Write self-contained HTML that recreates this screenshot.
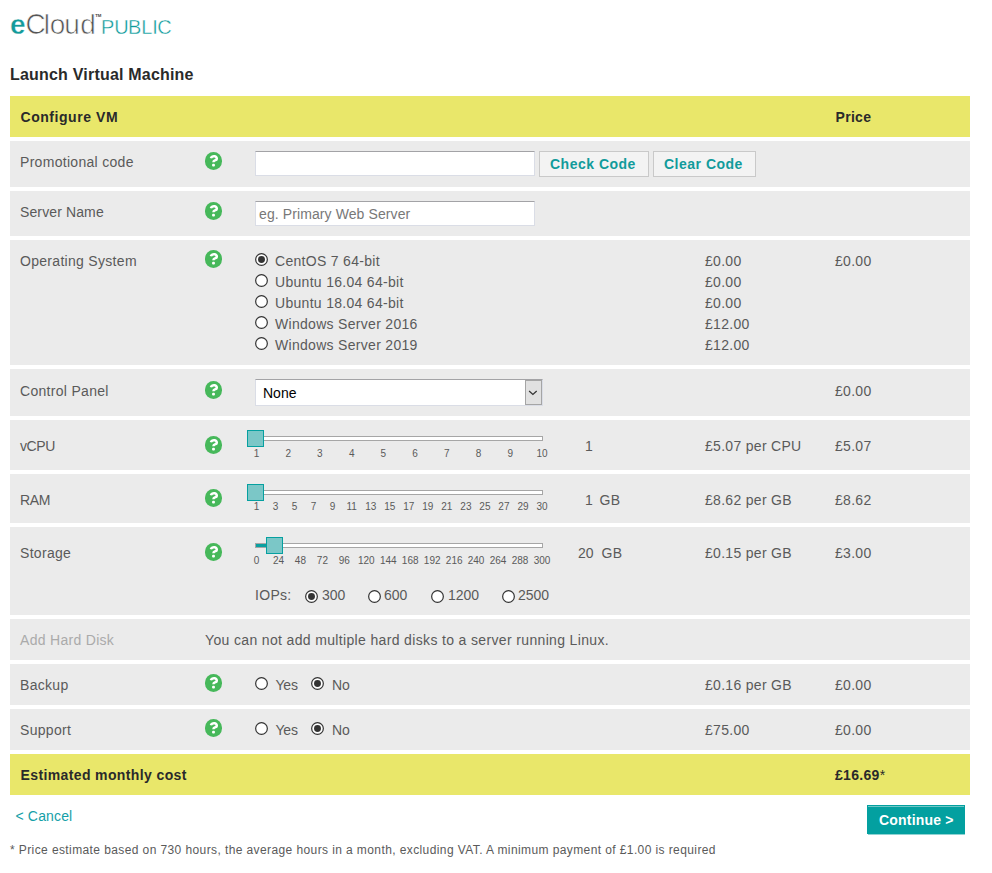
<!DOCTYPE html>
<html><head><meta charset="utf-8">
<style>
*{margin:0;padding:0;box-sizing:border-box}
html,body{width:992px;height:873px;background:#fff;overflow:hidden}
body{position:relative;font-family:"Liberation Sans",sans-serif;font-size:14px;color:#5a5a5a}
.a{position:absolute;white-space:nowrap;line-height:16px}
.row{position:absolute;left:10px;width:960px;background:#ebebeb}
.y{background:#e9e76a}
.b{font-weight:bold;color:#2a2a2a}
.help{position:absolute;width:17.5px;height:17.5px;border-radius:50%;background:#46b85a}
.help svg{position:absolute;left:0;top:0}
.inp{position:absolute;background:#fff;border:1px solid #dadde6;border-top-color:#a3a3a6}
.btn{position:absolute;background:#f3f3f3;border:1px solid #c9c9c9;color:#119b9b;font-weight:bold}
.rd{position:absolute}
.track{position:absolute;height:5px;background:#fff;border:1px solid #a6a6a6}
.handle{position:absolute;width:17px;height:17px;background:#7bc7c7;border:1.25px solid #06a0a0}
.tick{position:absolute;font-size:10px;line-height:12px;color:#5a5a5a;transform:translateX(-50%)}
.ls{letter-spacing:0.3px}
</style></head><body>

<!-- logo -->
<svg style="position:absolute;left:0;top:0" width="200" height="50">
 <text x="10" y="34" font-family="Liberation Sans" font-weight="bold" font-size="28" fill="#139a9a" stroke="#fff" stroke-width="0.35">e</text>
 <text transform="translate(0 34) scale(1 1.07) translate(0 -34)" x="25.4" y="34" font-family="Liberation Sans" font-size="28" fill="#555" stroke="#fff" stroke-width="0.65">C</text><text transform="translate(0 34) scale(1 1.02) translate(0 -34)" x="43.65 49.8 64.3 80.2" y="34" font-family="Liberation Sans" font-size="28" fill="#555" stroke="#fff" stroke-width="0.65">loud</text>
 <text x="95.2" y="16.9" font-family="Liberation Sans" font-weight="bold" font-size="4.3" fill="#444">TM</text>
 <text transform="translate(0 34) scale(1 1.0) translate(0 -34)" x="101 114.25 128 141.3 152.35 157.15" y="34" font-family="Liberation Sans" font-size="20" fill="#0c9a9a" stroke="#fff" stroke-width="0.4">PUBLIC</text>
</svg>

<div class="a b" style="left:10px;top:66px;font-size:16px;line-height:18px;letter-spacing:0.2px">Launch Virtual Machine</div>

<!-- header -->
<div class="row y" style="top:96px;height:41px"></div>
<div class="a b" style="left:20.5px;top:109px;letter-spacing:0.55px">Configure VM</div>
<div class="a b" style="left:835.5px;top:109px;letter-spacing:0.3px">Price</div>

<!-- promo -->
<div class="row" style="top:141px;height:46px"></div>
<div class="a ls" style="left:20px;top:154px">Promotional code</div>
<div class="help" style="left:204.8px;top:152.3px"><svg width="18" height="18" viewBox="0 0 18 18"><path d="M5.95 6.2 A2.95 2.45 0 1 1 11.5 7.7 C10.3 8.4 8.4 8.6 8.4 10.2" fill="none" stroke="#fff" stroke-width="2.5"/><rect x="7.05" y="11.8" width="2.9" height="2.8" rx="1.1" fill="#fff"/></svg></div>
<div class="inp" style="left:255px;top:151px;width:280px;height:25px"></div>
<div class="btn" style="left:539px;top:151px;width:110px;height:26px"></div>
<div class="a b ls" style="left:550px;top:156px;color:#119b9b;letter-spacing:0.5px">Check Code</div>
<div class="btn" style="left:653px;top:151px;width:103px;height:26px"></div>
<div class="a b ls" style="left:664px;top:156px;color:#119b9b;letter-spacing:0.5px">Clear Code</div>

<!-- server name -->
<div class="row" style="top:191px;height:45px"></div>
<div class="a" style="left:20px;top:204px;letter-spacing:0.12px">Server Name</div>
<div class="help" style="left:204.8px;top:202.3px"><svg width="18" height="18" viewBox="0 0 18 18"><path d="M5.95 6.2 A2.95 2.45 0 1 1 11.5 7.7 C10.3 8.4 8.4 8.6 8.4 10.2" fill="none" stroke="#fff" stroke-width="2.5"/><rect x="7.05" y="11.8" width="2.9" height="2.8" rx="1.1" fill="#fff"/></svg></div>
<div class="inp" style="left:255px;top:201px;width:280px;height:25px"></div>
<div class="a" style="left:259px;top:206px;color:#787878;letter-spacing:0.1px">eg. Primary Web Server</div>

<!-- OS -->
<div class="row" style="top:240px;height:125px"></div>
<div class="a ls" style="left:20px;top:253px">Operating System</div>
<div class="help" style="left:204.8px;top:250.3px"><svg width="18" height="18" viewBox="0 0 18 18"><path d="M5.95 6.2 A2.95 2.45 0 1 1 11.5 7.7 C10.3 8.4 8.4 8.6 8.4 10.2" fill="none" stroke="#fff" stroke-width="2.5"/><rect x="7.05" y="11.8" width="2.9" height="2.8" rx="1.1" fill="#fff"/></svg></div>
<svg class="rd" style="left:255px;top:253px" width="13" height="13"><circle cx="6.5" cy="6.5" r="5.85" fill="#fff" stroke="#333" stroke-width="1.2"/><circle cx="6.5" cy="6.5" r="3.45" fill="#333"/></svg>
<div class="a ls" style="left:275px;top:253px">CentOS 7 64-bit</div>
<svg class="rd" style="left:255px;top:274px" width="13" height="13"><circle cx="6.5" cy="6.5" r="5.85" fill="#fff" stroke="#333" stroke-width="1.2"/></svg>
<div class="a ls" style="left:275px;top:274px">Ubuntu 16.04 64-bit</div>
<svg class="rd" style="left:255px;top:295px" width="13" height="13"><circle cx="6.5" cy="6.5" r="5.85" fill="#fff" stroke="#333" stroke-width="1.2"/></svg>
<div class="a ls" style="left:275px;top:295px">Ubuntu 18.04 64-bit</div>
<svg class="rd" style="left:255px;top:316px" width="13" height="13"><circle cx="6.5" cy="6.5" r="5.85" fill="#fff" stroke="#333" stroke-width="1.2"/></svg>
<div class="a ls" style="left:275px;top:316px">Windows Server 2016</div>
<svg class="rd" style="left:255px;top:337px" width="13" height="13"><circle cx="6.5" cy="6.5" r="5.85" fill="#fff" stroke="#333" stroke-width="1.2"/></svg>
<div class="a ls" style="left:275px;top:337px">Windows Server 2019</div>
<div class="a ls" style="left:705px;top:253px">£0.00</div>
<div class="a ls" style="left:705px;top:274px">£0.00</div>
<div class="a ls" style="left:705px;top:295px">£0.00</div>
<div class="a ls" style="left:705px;top:316px">£12.00</div>
<div class="a ls" style="left:705px;top:337px">£12.00</div>
<div class="a ls" style="left:835px;top:253px">£0.00</div>

<!-- control panel -->
<div class="row" style="top:369px;height:47px"></div>
<div class="a ls" style="left:20px;top:383px">Control Panel</div>
<div class="help" style="left:204.8px;top:381.3px"><svg width="18" height="18" viewBox="0 0 18 18"><path d="M5.95 6.2 A2.95 2.45 0 1 1 11.5 7.7 C10.3 8.4 8.4 8.6 8.4 10.2" fill="none" stroke="#fff" stroke-width="2.5"/><rect x="7.05" y="11.8" width="2.9" height="2.8" rx="1.1" fill="#fff"/></svg></div>
<div class="inp" style="left:255px;top:379px;width:288px;height:27px"></div>
<div class="a" style="left:263px;top:385px;color:#000">None</div>
<div style="position:absolute;left:525px;top:380px;width:17px;height:25px;background:#e1e1e1;border:1px solid #a5a5a5"></div>
<svg style="position:absolute;left:525px;top:380px" width="17" height="25"><path d="M4.1 11 L7.9 14.4 L11.7 11" fill="none" stroke="#333" stroke-width="1.25"/></svg>
<div class="a ls" style="left:835px;top:383px">£0.00</div>

<!-- vCPU -->
<div class="row" style="top:420px;height:50px"></div>
<div class="a" style="left:20px;top:438px;letter-spacing:-0.4px">vCPU</div>
<div class="help" style="left:204.8px;top:436.3px"><svg width="18" height="18" viewBox="0 0 18 18"><path d="M5.95 6.2 A2.95 2.45 0 1 1 11.5 7.7 C10.3 8.4 8.4 8.6 8.4 10.2" fill="none" stroke="#fff" stroke-width="2.5"/><rect x="7.05" y="11.8" width="2.9" height="2.8" rx="1.1" fill="#fff"/></svg></div>
<div class="track" style="left:256px;top:436px;width:287px"></div>
<div class="handle" style="left:247px;top:430px"></div>
<div class="tick" style="left:256.5px;top:448px">1</div>
<div class="tick" style="left:288.2px;top:448px">2</div>
<div class="tick" style="left:319.9px;top:448px">3</div>
<div class="tick" style="left:351.7px;top:448px">4</div>
<div class="tick" style="left:383.4px;top:448px">5</div>
<div class="tick" style="left:415.1px;top:448px">6</div>
<div class="tick" style="left:446.8px;top:448px">7</div>
<div class="tick" style="left:478.6px;top:448px">8</div>
<div class="tick" style="left:510.3px;top:448px">9</div>
<div class="tick" style="left:542.0px;top:448px">10</div>
<div class="a ls" style="left:585px;top:438px">1</div>
<div class="a ls" style="left:705px;top:438px">£5.07 per CPU</div>
<div class="a ls" style="left:835px;top:438px">£5.07</div>

<!-- RAM -->
<div class="row" style="top:474px;height:49px"></div>
<div class="a" style="left:20px;top:492px;letter-spacing:-0.3px">RAM</div>
<div class="help" style="left:204.8px;top:489.3px"><svg width="18" height="18" viewBox="0 0 18 18"><path d="M5.95 6.2 A2.95 2.45 0 1 1 11.5 7.7 C10.3 8.4 8.4 8.6 8.4 10.2" fill="none" stroke="#fff" stroke-width="2.5"/><rect x="7.05" y="11.8" width="2.9" height="2.8" rx="1.1" fill="#fff"/></svg></div>
<div class="track" style="left:256px;top:490px;width:287px"></div>
<div class="handle" style="left:247px;top:484px"></div>
<div class="tick" style="left:256.5px;top:501px">1</div>
<div class="tick" style="left:275.5px;top:501px">3</div>
<div class="tick" style="left:294.6px;top:501px">5</div>
<div class="tick" style="left:313.6px;top:501px">7</div>
<div class="tick" style="left:332.6px;top:501px">9</div>
<div class="tick" style="left:351.7px;top:501px">11</div>
<div class="tick" style="left:370.7px;top:501px">13</div>
<div class="tick" style="left:389.7px;top:501px">15</div>
<div class="tick" style="left:408.8px;top:501px">17</div>
<div class="tick" style="left:427.8px;top:501px">19</div>
<div class="tick" style="left:446.8px;top:501px">21</div>
<div class="tick" style="left:465.9px;top:501px">23</div>
<div class="tick" style="left:484.9px;top:501px">25</div>
<div class="tick" style="left:503.9px;top:501px">27</div>
<div class="tick" style="left:523.0px;top:501px">29</div>
<div class="tick" style="left:542.0px;top:501px">30</div>
<div class="a" style="left:585px;top:492px">1</div><div class="a ls" style="left:599.5px;top:492px">GB</div>
<div class="a ls" style="left:705px;top:492px">£8.62 per GB</div>
<div class="a ls" style="left:835px;top:492px">£8.62</div>

<!-- Storage -->
<div class="row" style="top:527px;height:88px"></div>
<div class="a ls" style="left:20px;top:545px">Storage</div>
<div class="help" style="left:204.8px;top:543.3px"><svg width="18" height="18" viewBox="0 0 18 18"><path d="M5.95 6.2 A2.95 2.45 0 1 1 11.5 7.7 C10.3 8.4 8.4 8.6 8.4 10.2" fill="none" stroke="#fff" stroke-width="2.5"/><rect x="7.05" y="11.8" width="2.9" height="2.8" rx="1.1" fill="#fff"/></svg></div>
<div class="track" style="left:255px;top:543px;width:288px"></div>
<div style="position:absolute;left:256px;top:544px;width:12px;height:3px;background:#0aa0a0"></div>
<div class="handle" style="left:266px;top:537px"></div>
<div class="tick" style="left:256.5px;top:555px">0</div>
<div class="tick" style="left:278.5px;top:555px">24</div>
<div class="tick" style="left:300.4px;top:555px">48</div>
<div class="tick" style="left:322.4px;top:555px">72</div>
<div class="tick" style="left:344.3px;top:555px">96</div>
<div class="tick" style="left:366.3px;top:555px">120</div>
<div class="tick" style="left:388.3px;top:555px">144</div>
<div class="tick" style="left:410.2px;top:555px">168</div>
<div class="tick" style="left:432.2px;top:555px">192</div>
<div class="tick" style="left:454.2px;top:555px">216</div>
<div class="tick" style="left:476.1px;top:555px">240</div>
<div class="tick" style="left:498.1px;top:555px">264</div>
<div class="tick" style="left:520.0px;top:555px">288</div>
<div class="tick" style="left:542.0px;top:555px">300</div>
<div class="a" style="left:578px;top:545px">20</div><div class="a ls" style="left:601.5px;top:545px">GB</div>
<div class="a ls" style="left:705px;top:545px">£0.15 per GB</div>
<div class="a ls" style="left:835px;top:545px">£3.00</div>
<div class="a ls" style="left:255px;top:587px">IOPs:</div>
<svg class="rd" style="left:305px;top:590px" width="13" height="13"><circle cx="6.5" cy="6.5" r="5.85" fill="#fff" stroke="#333" stroke-width="1.2"/><circle cx="6.5" cy="6.5" r="3.45" fill="#333"/></svg>
<div class="a ls" style="left:322px;top:587px;letter-spacing:0">300</div>
<svg class="rd" style="left:368px;top:590px" width="13" height="13"><circle cx="6.5" cy="6.5" r="5.85" fill="#fff" stroke="#333" stroke-width="1.2"/></svg>
<div class="a ls" style="left:384px;top:587px;letter-spacing:0">600</div>
<svg class="rd" style="left:431px;top:590px" width="13" height="13"><circle cx="6.5" cy="6.5" r="5.85" fill="#fff" stroke="#333" stroke-width="1.2"/></svg>
<div class="a ls" style="left:448px;top:587px;letter-spacing:0">1200</div>
<svg class="rd" style="left:502px;top:590px" width="13" height="13"><circle cx="6.5" cy="6.5" r="5.85" fill="#fff" stroke="#333" stroke-width="1.2"/></svg>
<div class="a ls" style="left:518px;top:587px;letter-spacing:0">2500</div>

<!-- add hard disk -->
<div class="row" style="top:619px;height:41px"></div>
<div class="a ls" style="left:20px;top:632px;color:#aaa">Add Hard Disk</div>
<div class="a" style="left:205px;top:632px;letter-spacing:0.35px">You can not add multiple hard disks to a server running Linux.</div>

<!-- backup -->
<div class="row" style="top:664px;height:41px"></div>
<div class="a ls" style="left:20px;top:677px">Backup</div>
<div class="help" style="left:204.8px;top:674.3px"><svg width="18" height="18" viewBox="0 0 18 18"><path d="M5.95 6.2 A2.95 2.45 0 1 1 11.5 7.7 C10.3 8.4 8.4 8.6 8.4 10.2" fill="none" stroke="#fff" stroke-width="2.5"/><rect x="7.05" y="11.8" width="2.9" height="2.8" rx="1.1" fill="#fff"/></svg></div>
<svg class="rd" style="left:255px;top:677px" width="13" height="13"><circle cx="6.5" cy="6.5" r="5.85" fill="#fff" stroke="#333" stroke-width="1.2"/></svg>
<div class="a" style="left:275.5px;top:677px;letter-spacing:-0.2px">Yes</div>
<svg class="rd" style="left:311px;top:677px" width="13" height="13"><circle cx="6.5" cy="6.5" r="5.85" fill="#fff" stroke="#333" stroke-width="1.2"/><circle cx="6.5" cy="6.5" r="3.45" fill="#333"/></svg>
<div class="a" style="left:332px;top:677px">No</div>
<div class="a ls" style="left:705px;top:677px">£0.16 per GB</div>
<div class="a ls" style="left:835px;top:677px">£0.00</div>

<!-- support -->
<div class="row" style="top:709px;height:41px"></div>
<div class="a ls" style="left:20px;top:722px">Support</div>
<div class="help" style="left:204.8px;top:719.3px"><svg width="18" height="18" viewBox="0 0 18 18"><path d="M5.95 6.2 A2.95 2.45 0 1 1 11.5 7.7 C10.3 8.4 8.4 8.6 8.4 10.2" fill="none" stroke="#fff" stroke-width="2.5"/><rect x="7.05" y="11.8" width="2.9" height="2.8" rx="1.1" fill="#fff"/></svg></div>
<svg class="rd" style="left:255px;top:722px" width="13" height="13"><circle cx="6.5" cy="6.5" r="5.85" fill="#fff" stroke="#333" stroke-width="1.2"/></svg>
<div class="a" style="left:275.5px;top:722px;letter-spacing:-0.2px">Yes</div>
<svg class="rd" style="left:311px;top:722px" width="13" height="13"><circle cx="6.5" cy="6.5" r="5.85" fill="#fff" stroke="#333" stroke-width="1.2"/><circle cx="6.5" cy="6.5" r="3.45" fill="#333"/></svg>
<div class="a" style="left:332px;top:722px">No</div>
<div class="a ls" style="left:705px;top:722px">£75.00</div>
<div class="a ls" style="left:835px;top:722px">£0.00</div>

<!-- estimated -->
<div class="row y" style="top:754px;height:41px"></div>
<div class="a b" style="left:20.5px;top:767px;letter-spacing:0.38px">Estimated monthly cost</div>
<div class="a b ls" style="left:835px;top:767px">£16.69<span style="font-weight:normal">*</span></div>

<div class="a" style="left:15.5px;top:808px;color:#14a0a8;letter-spacing:0.15px">&lt; Cancel</div>
<div style="position:absolute;left:867px;top:805px;width:98px;height:29px;background:#03a0a0"></div><div style="position:absolute;left:868px;top:806px;width:96px;height:1px;background:#6fc6c6"></div><div style="position:absolute;left:868px;top:834px;width:97px;height:1px;background:#8fd3d3"></div>
<div class="a b" style="left:879px;top:812px;color:#fff;letter-spacing:0.2px">Continue &gt;</div>

<div class="a" style="left:10px;top:843px;font-size:12px;line-height:14px;letter-spacing:0.4px">* Price estimate based on 730 hours, the average hours in a month, excluding VAT. A minimum payment of £1.00 is required</div>

</body></html>
